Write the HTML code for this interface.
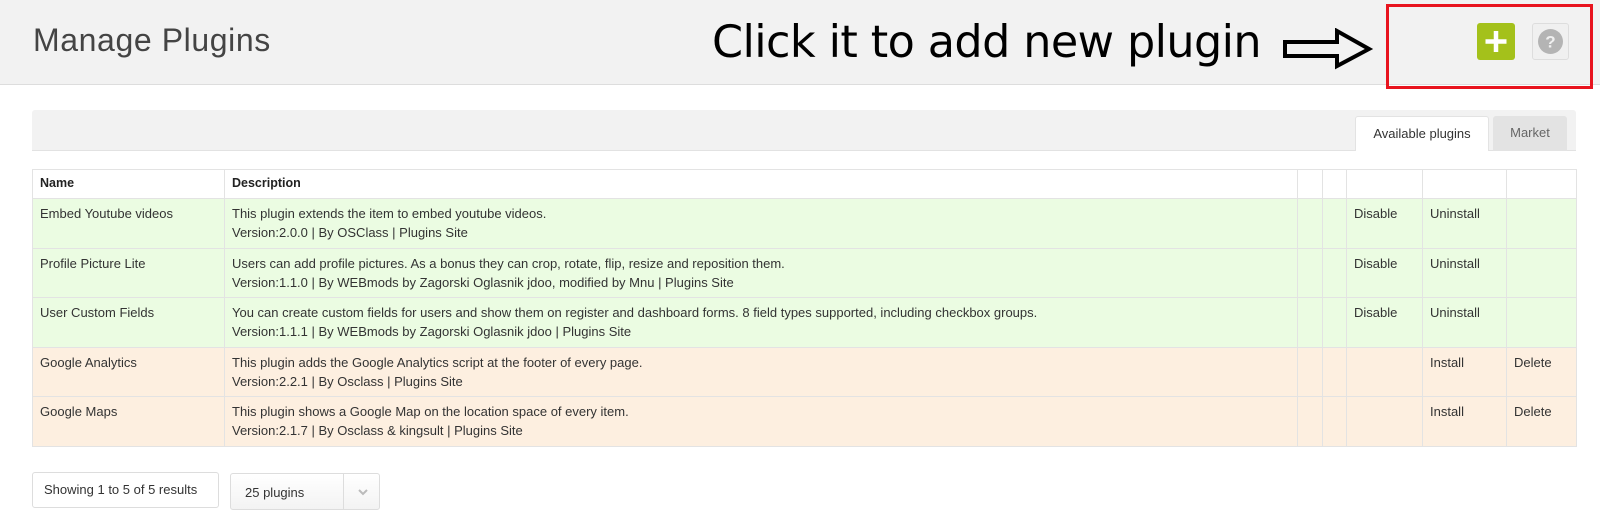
<!DOCTYPE html>
<html><head><meta charset="utf-8"><style>
*{box-sizing:border-box;margin:0;padding:0}
body{width:1600px;height:518px;background:#fff;font-family:"Liberation Sans",Arial,sans-serif;color:#333;position:relative;overflow:hidden}
.hdr{position:absolute;left:0;top:0;width:1600px;height:85px;background:#f2f2f2;border-bottom:1px solid #ddd}
.title{position:absolute;left:33px;top:22px;font-size:32px;color:#444;letter-spacing:0.6px}
.ann{position:absolute;left:712px;top:17px;font-size:44.5px;color:#000;font-family:"DejaVu Sans","Liberation Sans",sans-serif;letter-spacing:-0.6px}
.red{position:absolute;left:1386px;top:4px;width:207px;height:85px;border:3px solid #e8141e}
.plus{position:absolute;left:1477px;top:23px;width:38px;height:37px;background:#a4c11b;border-radius:3px}
.help{position:absolute;left:1532px;top:23px;width:37px;height:37px;background:#f0f0f0;border:1px solid #ddd;border-radius:3px}
.tabbar{position:absolute;left:32px;top:110px;width:1544px;height:41px;background:#f2f2f2;border-bottom:1px solid #e2e2e2;border-radius:3px 3px 0 0}
.tab{position:absolute;top:116px;height:35px;font-size:13px;text-align:center;line-height:33px;border-radius:3px 3px 0 0}
table{position:absolute;left:32px;top:169px;width:1544px;border-collapse:collapse;table-layout:fixed;font-size:13px}
td,th{border:1px solid #e3e3e3;vertical-align:top;text-align:left;padding:5px 7px;line-height:19px}
th{height:29px;font-weight:bold;font-size:12.5px;color:#222;padding:4px 7px;background:#fff}
tr.g td{background:#ebfce2;height:49.5px}
tr.o td{background:#fdefe0;height:49.5px}
.box{position:absolute;border:1px solid #ddd;border-radius:3px;font-size:13px;background:#fff}
</style></head><body>
<div class="hdr"></div>
<div class="title">Manage Plugins</div>
<div class="ann">Click it to add new plugin</div>
<svg style="position:absolute;left:1282px;top:28px" width="92" height="42" viewBox="0 0 92 42"><path d="M3 14 H55 V3 L87 21 L55 38 V28 H3 Z" fill="none" stroke="#000" stroke-width="4" stroke-linejoin="miter"/></svg>
<div class="red"></div>
<div class="plus"><svg width="38" height="37" viewBox="0 0 38 37"><path d="M19 8 V29 M8.5 18.5 H29.5" stroke="#fff" stroke-width="4.5"/></svg></div>
<div class="help"><svg width="35" height="35" viewBox="0 0 35 35"><circle cx="17.5" cy="17.5" r="12.5" fill="#b4b4b4"/><text x="17.5" y="23.5" text-anchor="middle" font-family="Liberation Sans" font-weight="bold" font-size="17" fill="#f0f0f0">?</text></svg></div>
<div class="tabbar"></div>
<div class="tab" style="left:1355px;width:134px;background:#fff;border:1px solid #e3e3e3;border-bottom:none;color:#333">Available plugins</div>
<div class="tab" style="left:1493px;width:74px;background:#e3e3e3;color:#666">Market</div>
<table>
<colgroup><col style="width:192px"><col style="width:1073px"><col style="width:25px"><col style="width:24px"><col style="width:76px"><col style="width:84px"><col style="width:70px"></colgroup>
<tr><th>Name</th><th>Description</th><th></th><th></th><th></th><th></th><th></th></tr>
<tr class="g"><td>Embed Youtube videos</td><td>This plugin extends the item to embed youtube videos.<br>Version:2.0.0 | By OSClass | Plugins Site</td><td></td><td></td><td>Disable</td><td>Uninstall</td><td></td></tr>
<tr class="g"><td>Profile Picture Lite</td><td>Users can add profile pictures. As a bonus they can crop, rotate, flip, resize and reposition them.<br>Version:1.1.0 | By WEBmods by Zagorski Oglasnik jdoo, modified by Mnu | Plugins Site</td><td></td><td></td><td>Disable</td><td>Uninstall</td><td></td></tr>
<tr class="g"><td>User Custom Fields</td><td>You can create custom fields for users and show them on register and dashboard forms. 8 field types supported, including checkbox groups.<br>Version:1.1.1 | By WEBmods by Zagorski Oglasnik jdoo | Plugins Site</td><td></td><td></td><td>Disable</td><td>Uninstall</td><td></td></tr>
<tr class="o"><td>Google Analytics</td><td>This plugin adds the Google Analytics script at the footer of every page.<br>Version:2.2.1 | By Osclass | Plugins Site</td><td></td><td></td><td></td><td>Install</td><td>Delete</td></tr>
<tr class="o"><td>Google Maps</td><td>This plugin shows a Google Map on the location space of every item.<br>Version:2.1.7 | By Osclass &amp; kingsult | Plugins Site</td><td></td><td></td><td></td><td>Install</td><td>Delete</td></tr>
</table>
<div class="box" style="left:32px;top:472px;width:187px;height:36px;line-height:34px;padding-left:11px">Showing 1 to 5 of 5 results</div>
<div class="box" style="left:230px;top:473px;width:150px;height:37px;line-height:38px;padding-left:14px;background:linear-gradient(#fff,#f3f3f3)">25 plugins<div style="position:absolute;left:112px;top:0;width:1px;height:35px;background:#ddd"></div><svg style="position:absolute;left:127px;top:15px" width="10" height="7" viewBox="0 0 10 7"><path d="M1 1 L5 5 L9 1" fill="none" stroke="#bbb" stroke-width="2"/></svg></div>
</body></html>
